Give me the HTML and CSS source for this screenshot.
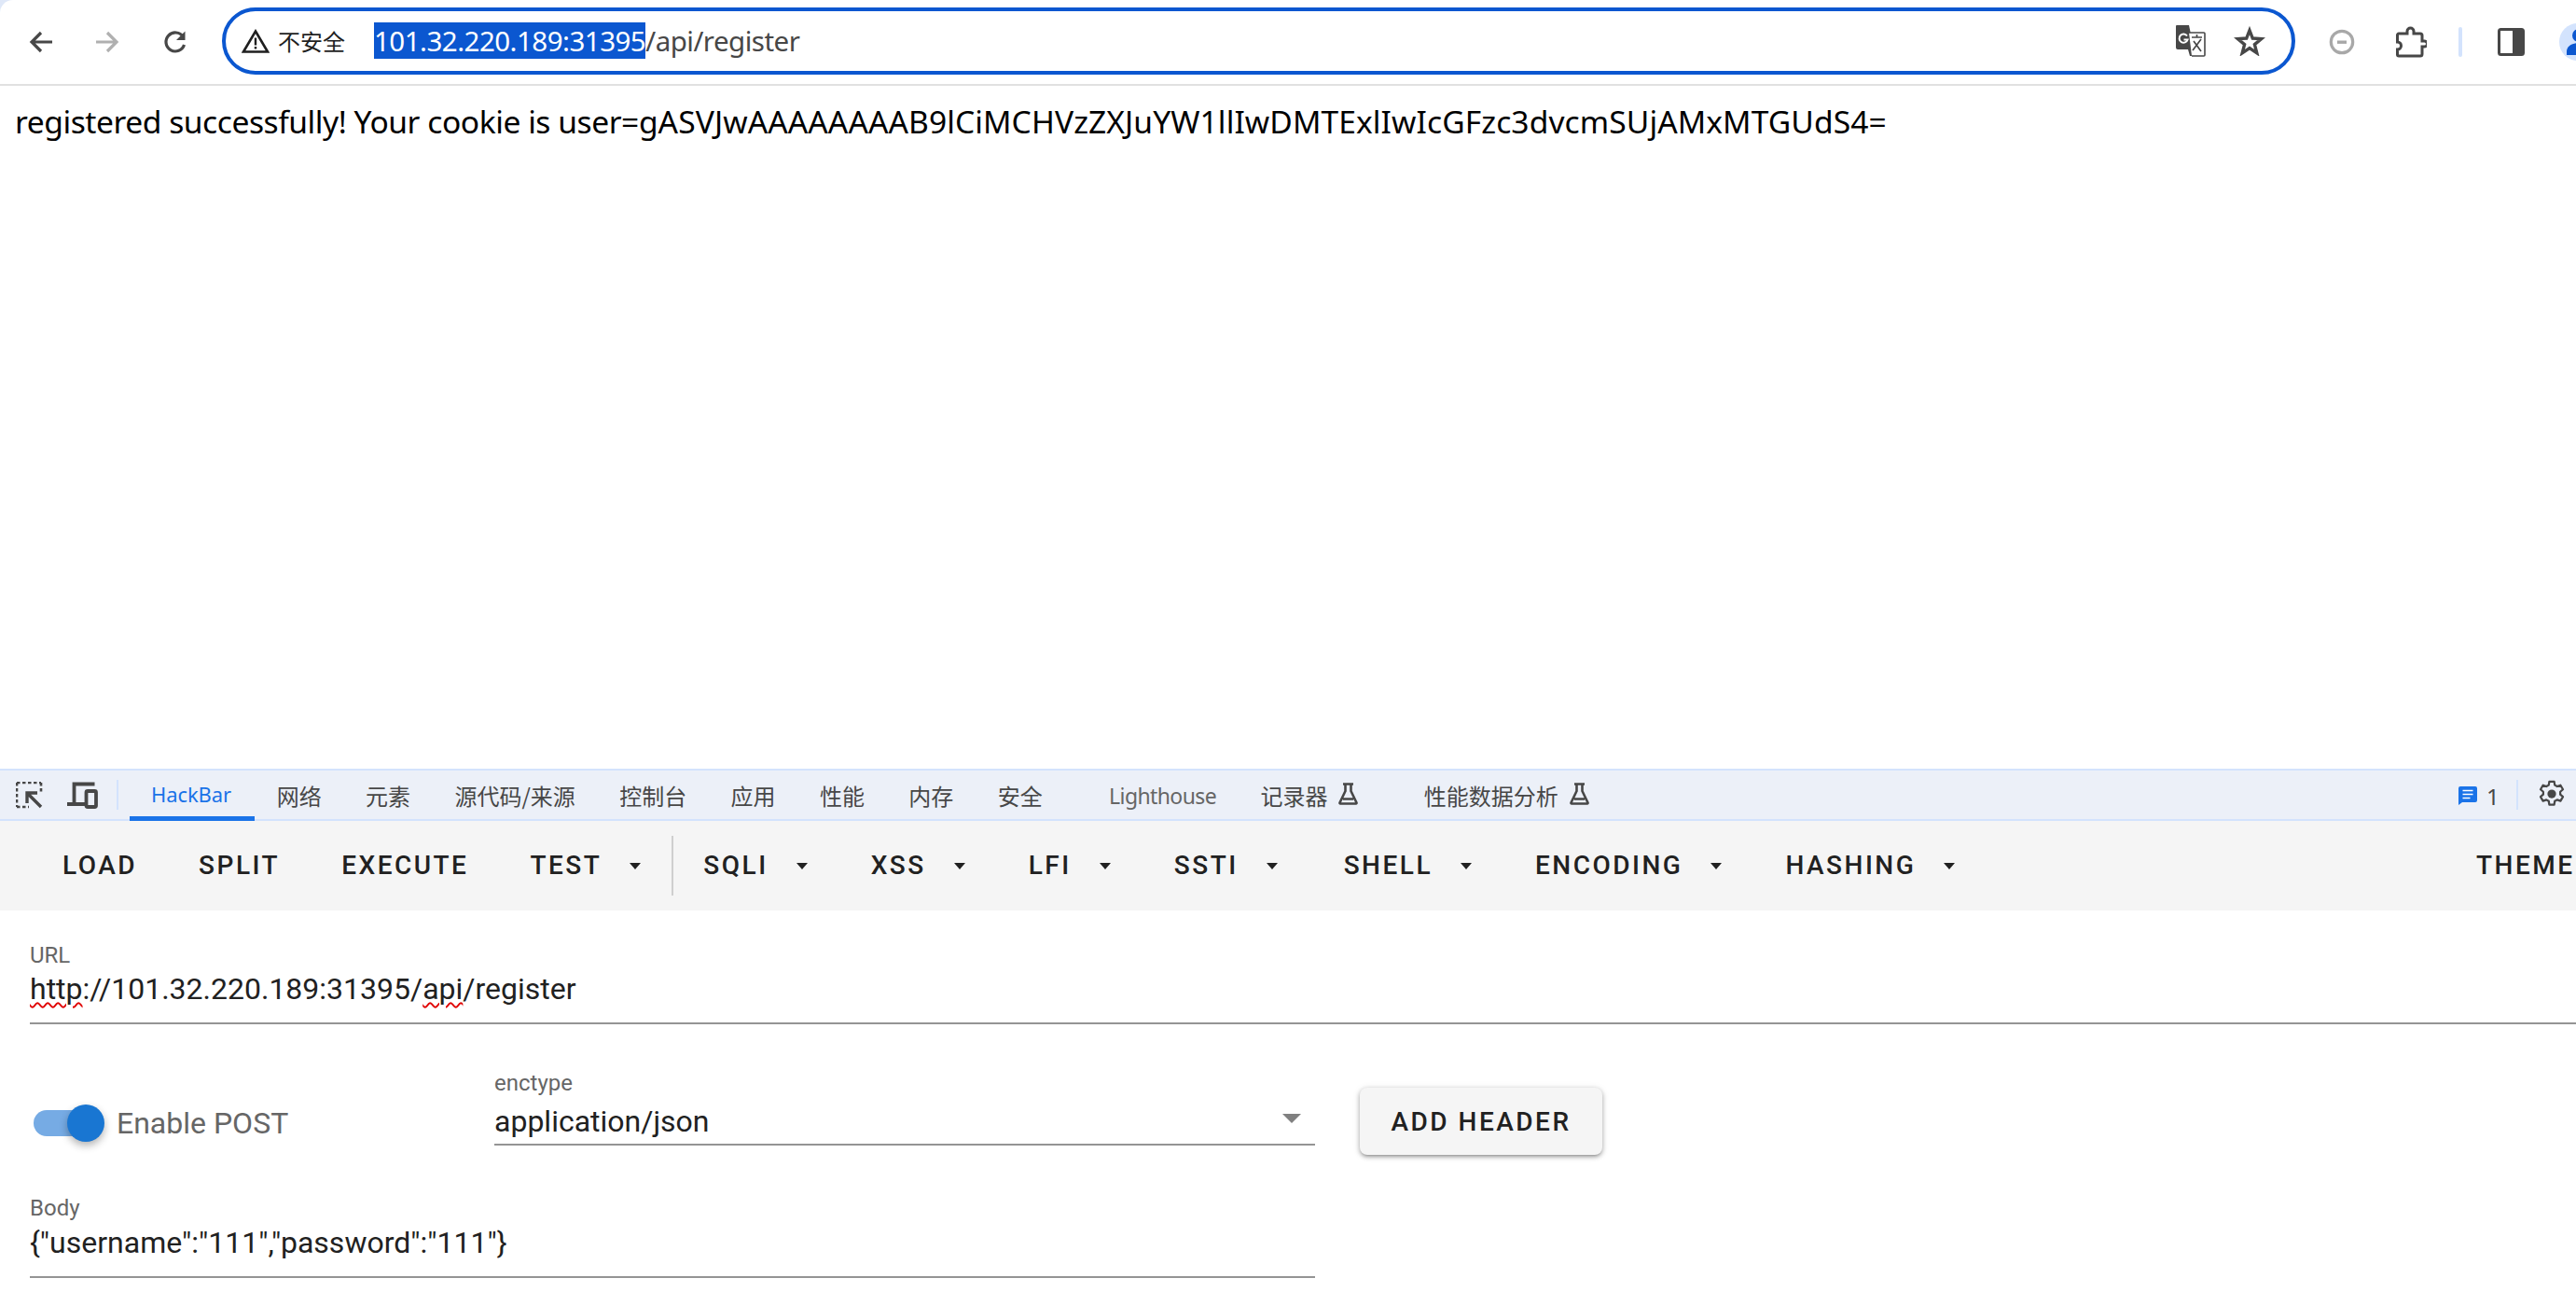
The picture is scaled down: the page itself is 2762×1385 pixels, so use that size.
FILE: index.html
```html
<!DOCTYPE html>
<html lang="zh-CN">
<head>
<meta charset="utf-8">
<title>register</title>
<link rel="stylesheet" href="styles.css">
</head>
<body>
<div class="window">
  <header class="toolbar">
    <svg class="nav nav-back" viewBox="0 0 26 24"><path d="M25 12H4M13 2 3 12l10 10" fill="none" stroke="#474747" stroke-width="3.2"/></svg>
    <svg class="nav nav-forward" viewBox="0 0 26 24"><path d="M1 12h21M13 2l10 10-10 10" fill="none" stroke="#b0b0b0" stroke-width="3.2"/></svg>
    <svg class="nav nav-reload" viewBox="0 0 26 26"><path d="M22.5 16a10 10 0 1 1-1.2-8.6" fill="none" stroke="#474747" stroke-width="3.2"/><path d="M23.5 1.5v9.5H14z" fill="#474747"/></svg>
    <div class="omnibox">
      <svg class="warn" viewBox="0 0 30 26"><path d="M15 2.5 28 24.5H2z" fill="none" stroke="#1f1f1f" stroke-width="2.6"/><path d="M13.8 9.5h2.4v8h-2.4zM13.8 19h2.4v2.4h-2.4z" fill="#1f1f1f"/></svg>
      <span class="insecure">不安全</span>
      <span class="address"><span class="selected">101.32.220.189:31395</span>/api/register</span>
      <svg class="translate" viewBox="0 0 33 34"><path d="M1.5 0H15l7 33h-6L14 26H3a2 2 0 0 1-2-2V1z" fill="#474747"/><path d="M15 8h16a1 1 0 0 1 1 1v23a1 1 0 0 1-1 1H18" fill="#fff" stroke="#474747" stroke-width="1.6"/><path d="M18 13h11M23.500 10v3M19 27l9-12M20 17l8 11" fill="none" stroke="#474747" stroke-width="1.7"/><path d="M13 11.500a4.600 4.600 0 1 0 .6 4H9.500" fill="none" stroke="#fff" stroke-width="2"/></svg>
      <svg class="star" viewBox="0 0 34 32"><path d="M17 4.500 20.300 13l9.400.6-7.300 6 2.400 9.200L17 23.600 9.200 28.800l2.400-9.200-7.300-6 9.400-.6z" fill="none" stroke="#474747" stroke-width="3.400"/></svg>
    </div>
    <svg class="dnd" viewBox="0 0 28 28"><circle cx="14" cy="14" r="11.700" fill="none" stroke="#a8a8a8" stroke-width="3.200"/><rect x="9" y="12.500" width="10" height="3.400" fill="#a8a8a8"/></svg>
    <svg class="puzzle" viewBox="0 0 33 34"><path d="M3 8h9V5.500a3.500 3.500 0 0 1 7 0V8h7a2 2 0 0 1 2 2v6h2.500a3 3 0 0 1 0 6H28v8a2 2 0 0 1-2 2H3a1.500 1.500 0 0 1-1.500-1.500V25a4 4 0 0 0 0-8V9.500A1.500 1.500 0 0 1 3 8z" fill="none" stroke="#474747" stroke-width="3"/></svg>
    <span class="tool-sep"></span>
    <svg class="sidebar" viewBox="0 0 29 30"><rect x="1.500" y="1.500" width="26" height="27" rx="2" fill="none" stroke="#474747" stroke-width="3"/><rect x="16" y="2" width="11" height="26" fill="#474747"/></svg>
    <div class="avatar"><svg viewBox="0 0 40 40"><circle cx="21" cy="13" r="7" fill="#0b57d0"/><path d="M8 34v-4c0-6 7-9 13-9s13 3 13 9v4z" fill="#0b57d0"/></svg></div>
  </header>

  <main class="page">registered successfully! Your cookie is user=<span class="cookie">gASVJwAAAAAAAAB9lCiMCHVzZXJuYW1llIwDMTExlIwIcGFzc3dvcmSUjAMxMTGUdS4=</span></main>

  <section class="devtools">
    <nav class="dt-tabs">
      <svg class="dt-inspect" viewBox="0 0 29 29"><path d="M1 1h26M1 1v26M1 27h13M27 1v12" fill="none" stroke="#474747" stroke-width="2.600" stroke-dasharray="3.500 2.500"/><path d="M27 27 13 13M12 23V12h11" fill="none" stroke="#474747" stroke-width="3.400"/></svg>
      <svg class="dt-device" viewBox="0 0 33 29"><path d="M7.500 22V2.500h22M0 24h19" fill="none" stroke="#474747" stroke-width="3.800"/><rect x="20.500" y="10" width="10.500" height="17" rx="1.500" fill="none" stroke="#474747" stroke-width="3.800"/></svg>
      <span class="dt-sep"></span>
      <span class="tab tab-active">HackBar</span>
      <span class="tab">网络</span>
      <span class="tab">元素</span>
      <span class="tab">源代码/来源</span>
      <span class="tab">控制台</span>
      <span class="tab">应用</span>
      <span class="tab">性能</span>
      <span class="tab">内存</span>
      <span class="tab">安全</span>
      <span class="tab tab-light">Lighthouse</span>
      <span class="tab">记录器<svg class="flask" viewBox="0 0 23 24"><path d="M6 1.500h11M8.500 2v7L2.500 21.500a.7.7 0 0 0 .6 1h16.800a.7.7 0 0 0 .6-1L14.500 9V2M6 17.500h11" fill="none" stroke="#474747" stroke-width="2.600"/></svg></span>
      <span class="tab tab-gap">性能数据分析<svg class="flask" viewBox="0 0 23 24"><path d="M6 1.500h11M8.500 2v7L2.500 21.500a.7.7 0 0 0 .6 1h16.800a.7.7 0 0 0 .6-1L14.500 9V2M6 17.500h11" fill="none" stroke="#474747" stroke-width="2.600"/></svg></span>
      <span class="dt-right">
        <svg class="msg" viewBox="0 0 20 20"><path d="M2 0h16a2 2 0 0 1 2 2v13a2 2 0 0 1-2 2H4l-4 3V2a2 2 0 0 1 2-2z" fill="#1a73e8"/><path d="M4.500 4.500h11M4.500 8.500h11M4.500 12.500h8" stroke="#fff" stroke-width="1.600"/></svg>
        <span class="msg-count">1</span>
        <span class="dt-sep dt-sep-right"></span>
        <svg class="gear" viewBox="0 0 24 24"><path d="M9.900 1.500h4.200l.5 3 2 1.100 2.900-1 2.100 3.600-2.300 2 0 2.300 2.300 2-2.100 3.600-2.900-1-2 1.100-.5 3H9.900l-.5-3-2-1.100-2.900 1-2.100-3.600 2.300-2 0-2.300-2.300-2 2.100-3.600 2.900 1 2-1.100z" fill="none" stroke="#474747" stroke-width="1.800" stroke-linejoin="round"/><circle cx="12" cy="12" r="3.700" fill="#474747"/></svg>
      </span>
    </nav>

    <div class="hb-bar">
      <span class="hb-btn hb-first">LOAD</span>
      <span class="hb-btn">SPLIT</span>
      <span class="hb-btn">EXECUTE</span>
      <span class="hb-btn hb-menu hb-test">TEST<i class="caret"></i></span>
      <span class="hb-div"></span>
      <span class="hb-btn hb-menu">SQLI<i class="caret"></i></span>
      <span class="hb-btn hb-menu">XSS<i class="caret"></i></span>
      <span class="hb-btn hb-menu">LFI<i class="caret"></i></span>
      <span class="hb-btn hb-menu hb-ssti">SSTI<i class="caret"></i></span>
      <span class="hb-btn hb-menu">SHELL<i class="caret"></i></span>
      <span class="hb-btn hb-menu">ENCODING<i class="caret"></i></span>
      <span class="hb-btn hb-menu">HASHING<i class="caret"></i></span>
      <span class="hb-btn hb-theme">THEME</span>
    </div>

    <div class="hb-form">
      <div class="field field-url">
        <label class="field-label">URL</label>
        <div class="field-value"><span class="spell">http</span>://101.32.220.189:31395/<span class="spell">api</span>/register</div>
      </div>
      <div class="post-row">
        <div class="switch"><span class="switch-track"></span><span class="switch-thumb"></span></div>
        <span class="switch-label">Enable POST</span>
        <div class="field field-select">
          <label class="field-label">enctype</label>
          <div class="field-value">application/json<i class="select-arrow"></i></div>
        </div>
        <span class="add-header">ADD HEADER</span>
      </div>
      <div class="field field-body">
        <label class="field-label">Body</label>
        <div class="field-value">{"username":"111","password":"111"}</div>
      </div>
    </div>
  </section>
</div>
</body>
</html>
```
FILE: styles.css
```css
* { box-sizing: border-box; }
html, body { margin: 0; padding: 0; background: #fff; }
body { width: 2762px; height: 1385px; overflow: hidden; font-family: "Noto Sans", "Noto Sans CJK SC", sans-serif; }
.window { width: 2762px; height: 1385px; display: flex; flex-direction: column; overflow: hidden; background: #dfe8f8; }

/* browser toolbar */
.toolbar { height: 92px; flex: none; display: flex; align-items: center; background: #fff; border-bottom: 2px solid #e1e1e1; border-top-left-radius: 14px; position: relative; }
.nav { flex: none; height: 24px; width: 26px; }
.nav-back { margin: 0 0 0 31px; }
.nav-forward { margin-left: 45px; }
.nav-reload { margin-left: 47px; height: 26px; }
.omnibox { flex: none; width: 2223px; height: 72px; margin: 0 0 2px 37px; border: 4px solid #0b57d0; border-radius: 36px; display: flex; align-items: center; }
.warn { width: 30px; height: 26px; margin-left: 17px; flex: none; }
.insecure { font: 24px/1 "Noto Sans CJK SC", sans-serif; color: #1f1f1f; margin-left: 9px; width: 103px; flex: none; }
.address { font: 29.500px/39px "Noto Sans", sans-serif; color: #474747; letter-spacing: -.52px; flex: 1; white-space: nowrap; margin-top: -2px; }
.selected { background: #0b57d0; color: #fff; display: inline-block; }
.translate { width: 33px; height: 34px; flex: none; margin-right: 30px; }
.star { width: 34px; height: 32px; flex: none; margin-right: 28px; }
.dnd { width: 28px; height: 28px; flex: none; margin-left: 36px; }
.puzzle { width: 33px; height: 34px; flex: none; margin-left: 44px; }
.tool-sep { width: 4px; height: 32px; flex: none; margin-left: 34px; background: #d3e3fd; border-radius: 2px; }
.sidebar { width: 29px; height: 30px; flex: none; margin-left: 38px; }
.avatar { width: 40px; height: 40px; flex: none; margin-left: 37px; border-radius: 50%; background: #d3e3fd; overflow: hidden; }
.avatar svg { display: block; width: 40px; height: 40px; }

/* page */
.page { height: 732px; flex: none; background: #fff; padding: 13px 0 0 16px; font: 33.600px/50px "Noto Sans", sans-serif; color: #000; letter-spacing: -.45px; white-space: nowrap; }
.cookie { letter-spacing: .09px; }

/* devtools */
.devtools { flex: 1; display: flex; flex-direction: column; min-height: 0; background: #fff; }
.dt-tabs { height: 56px; flex: none; background: #ecf0f8; border-top: 2px solid #d3e3fd; border-bottom: 2px solid #d3e3fd; display: flex; align-items: center; position: relative; color: #474747; }
.dt-inspect { width: 29px; height: 29px; margin-left: 17px; flex: none; }
.dt-device { width: 33px; height: 29px; margin-left: 26px; flex: none; }
.dt-sep { width: 2px; height: 32px; background: #d3e3fd; flex: none; margin-left: 20px; margin-right: 12px; }
.tab { height: 52px; padding: 2px 23.700px 0; font: 24px/50px "Noto Sans CJK SC", sans-serif; color: #474747; white-space: nowrap; display: flex; align-items: center; flex: none; }
.tab-active { color: #1a73e8; font: 22px/50px "Noto Sans", sans-serif; height: 54px; margin-bottom: -2px; padding: 0 23px; border-bottom: 5px solid #1a73e8; width: 134px; letter-spacing: -.1px; }
.tab-light { font: 23px/50px "Noto Sans", sans-serif; color: #666; margin-left: 24px; letter-spacing: -.6px; }
.tab-gap { margin-left: 22px; }
.flask { width: 23px; height: 24px; margin-left: 11px; margin-top: -4px; }
.dt-right { margin-left: auto; display: flex; align-items: center; padding-right: 11px; }
.msg { width: 20px; height: 20px; margin-top: 2px; }
.msg-count { font: 24px/1 "Noto Sans", sans-serif; color: #474747; margin-left: 10px; margin-top: 4px; width: 12px; }
.dt-sep-right { margin-left: 20px; margin-right: 21px; }
.gear { width: 30px; height: 30px; margin-top: -3px; }

/* hackbar toolbar */
.hb-bar { height: 96px; flex: none; background: #f5f5f5; display: flex; align-items: center; font: 500 28px/1 Roboto, sans-serif; letter-spacing: 2.500px; color: #212121; white-space: nowrap; position: relative; }
.hb-btn { flex: none; padding: 0 32px; margin-right: 2px; display: flex; align-items: center; }
.hb-first { margin-left: 35px; }
.hb-menu { padding-right: 26px; margin-right: 10px; }
.hb-test { margin-right: 7px; }
.hb-ssti { margin-right: 13px; }
.caret { width: 0; height: 0; border: 6.500px solid transparent; border-top: 7.500px solid #212121; border-bottom: 0; margin-left: 30px; }
.hb-div { width: 2px; height: 64px; background: #cfcfcf; flex: none; }
.hb-theme { position: absolute; left: 2623px; font-weight: 500; margin: 0; }

/* hackbar form */
.hb-form { flex: 1; padding: 34px 0 0 32px; display: flex; flex-direction: column; }
.field { display: flex; flex-direction: column; border-bottom: 2px solid #949494; font-family: Roboto, sans-serif; }
.field-label { font: 24px/28px Roboto, sans-serif; color: #666; }
.field-value { font: 32px/44px Roboto, sans-serif; color: #212121; position: relative; white-space: nowrap; }
.field-url { height: 88px; }
.spell { text-decoration: underline wavy #e00000 2px; text-underline-offset: 3px; }
.post-row { display: flex; align-items: center; height: 146px; margin-top: 33px; position: relative; }
.switch { width: 80px; height: 40px; margin-left: 4px; position: relative; flex: none; }
.switch-track { position: absolute; left: 0; top: 6px; width: 68px; height: 28px; border-radius: 14px; background: #76abe4; }
.switch-thumb { position: absolute; left: 36px; top: 0; width: 40px; height: 40px; border-radius: 50%; background: #1976d2; box-shadow: 0 4px 8px rgba(0,0,0,.3); }
.switch-label { font: 32px/40px Roboto, sans-serif; color: #666; width: 405px; flex: none; margin-left: 9px; }
.field-select { width: 880px; height: 81px; align-self: flex-start; margin-top: 16px; flex: none; }
.field-select .field-value { margin-top: 5px; }
.select-arrow { position: absolute; right: 15px; top: 14px; width: 0; height: 0; border: 10px solid transparent; border-top: 10px solid #808080; border-bottom: 0; }
.add-header { margin-left: 48px; margin-top: -4px; padding-top: 2px; width: 260px; height: 72px; flex: none; background: #f5f5f5; border-radius: 8px; box-shadow: 0 3px 3px -2px rgba(0,0,0,.25), 0 2px 4px 1px rgba(0,0,0,.2), 0 1px 8px rgba(0,0,0,.1); display: flex; align-items: center; justify-content: center; font: 500 28px/1 Roboto, sans-serif; letter-spacing: 2.500px; color: #212121; }
.field-body { width: 1378px; height: 89px; margin-top: 4px; }
.field-body .field-value { margin-top: 1px; }
```
